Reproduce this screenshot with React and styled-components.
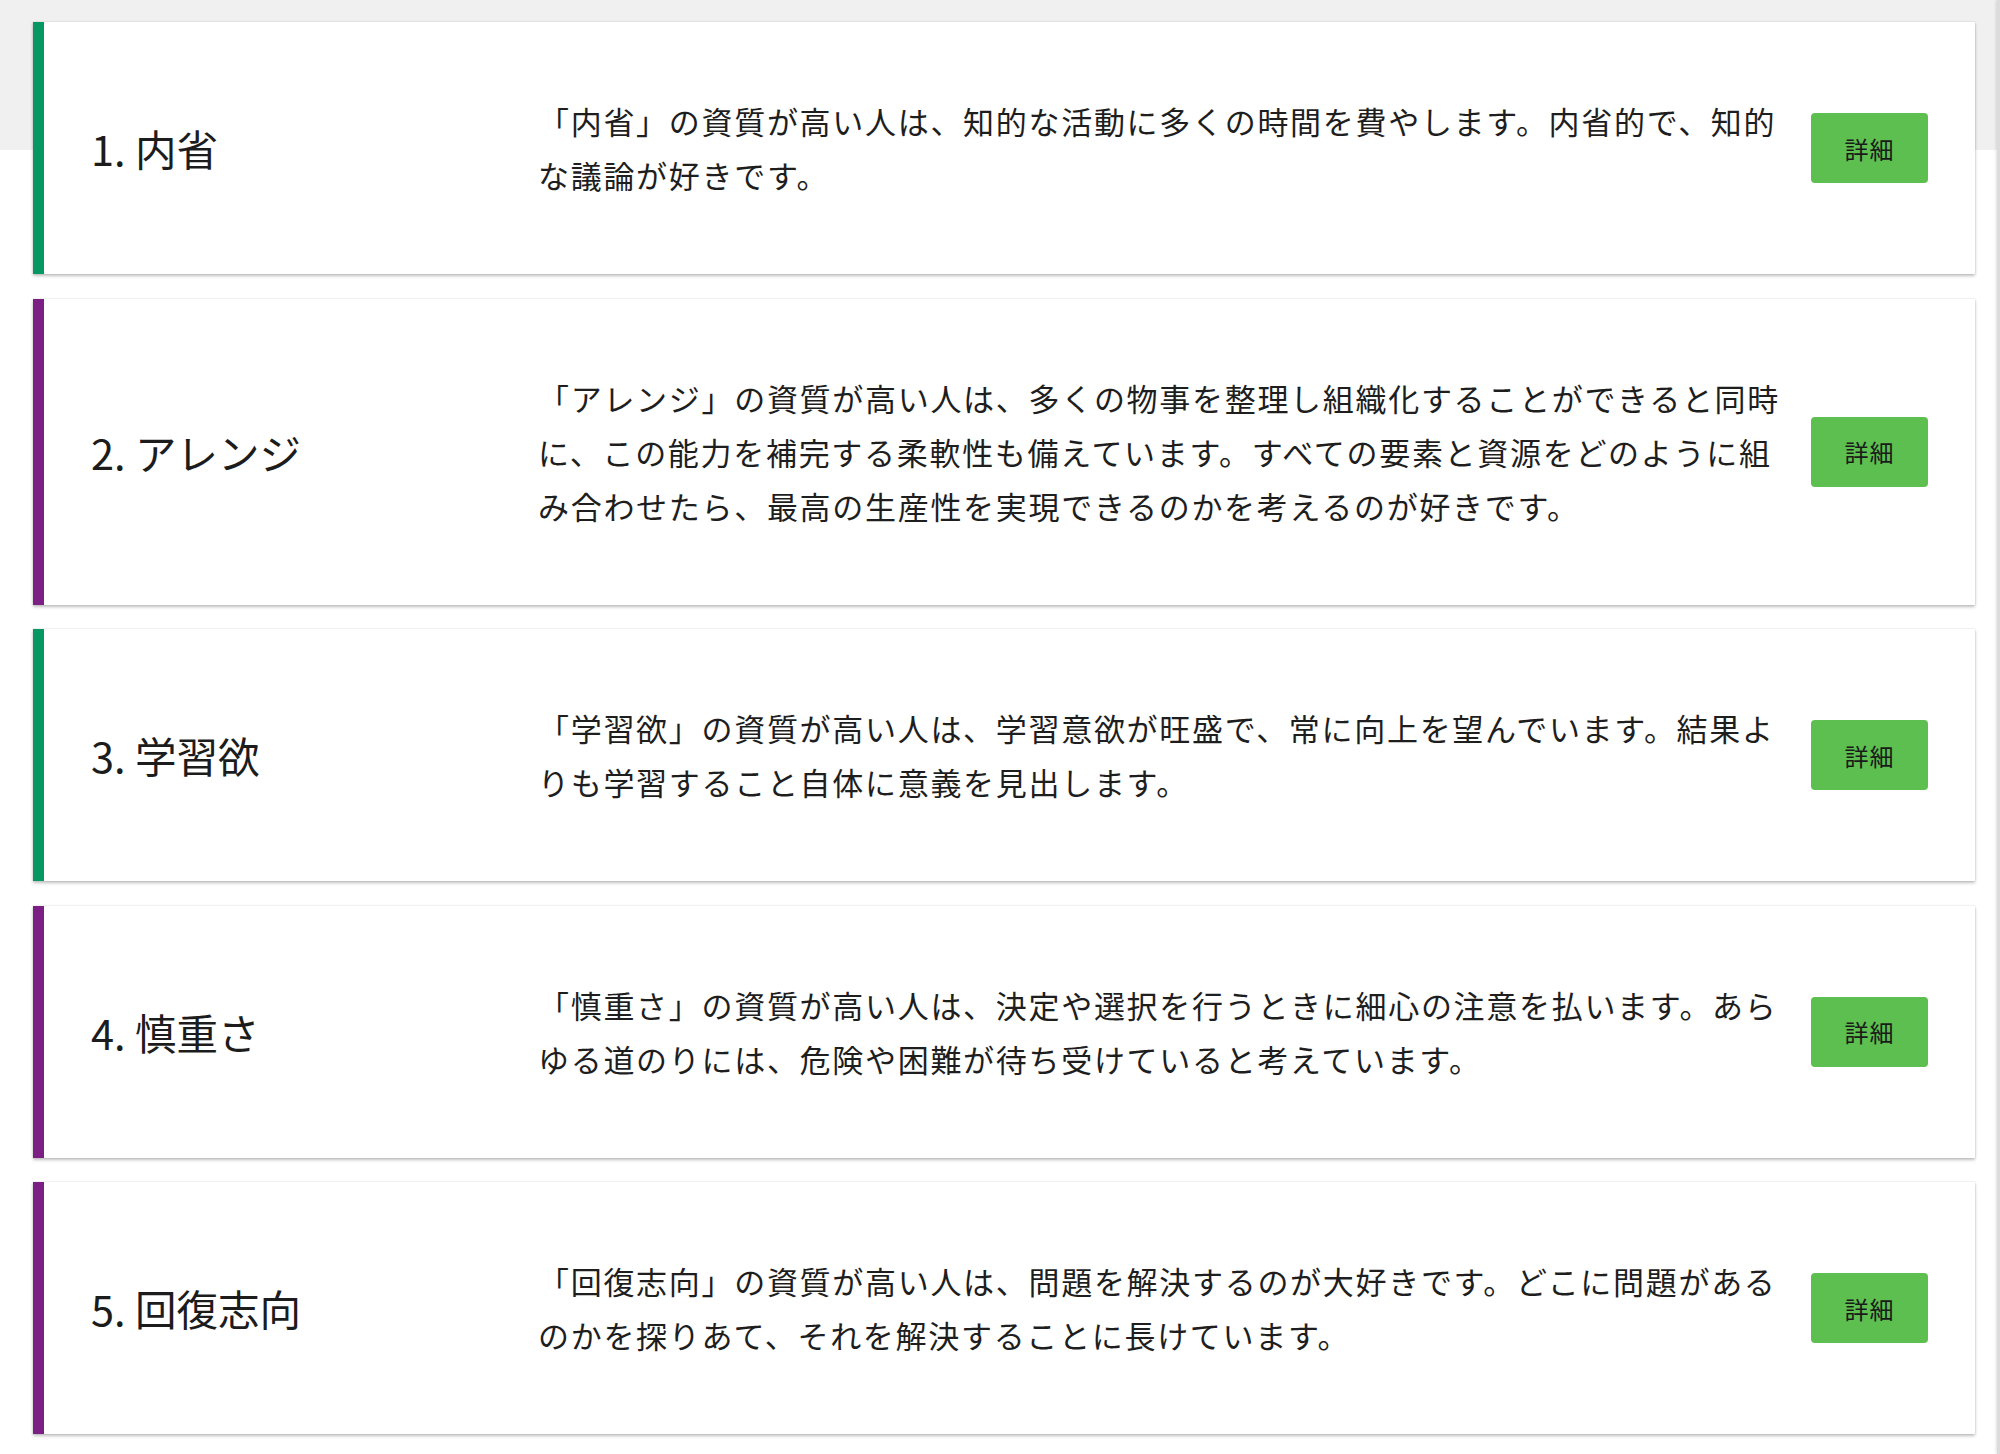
import React from "react";
import styled, { createGlobalStyle } from "styled-components";

const GREEN = "#079763";
const PURPLE = "#7b1f84";

const strengths = [
  {
    rank: 1,
    name: "内省",
    color: GREEN,
    text: "「内省」の資質が高い人は、知的な活動に多くの時間を費やします。内省的で、知的な議論が好きです。",
  },
  {
    rank: 2,
    name: "アレンジ",
    color: PURPLE,
    text: "「アレンジ」の資質が高い人は、多くの物事を整理し組織化することができると同時に、この能力を補完する柔軟性も備えています。すべての要素と資源をどのように組み合わせたら、最高の生産性を実現できるのかを考えるのが好きです。",
  },
  {
    rank: 3,
    name: "学習欲",
    color: GREEN,
    text: "「学習欲」の資質が高い人は、学習意欲が旺盛で、常に向上を望んでいます。結果よりも学習すること自体に意義を見出します。",
  },
  {
    rank: 4,
    name: "慎重さ",
    color: PURPLE,
    text: "「慎重さ」の資質が高い人は、決定や選択を行うときに細心の注意を払います。あらゆる道のりには、危険や困難が待ち受けていると考えています。",
  },
  {
    rank: 5,
    name: "回復志向",
    color: PURPLE,
    text: "「回復志向」の資質が高い人は、問題を解決するのが大好きです。どこに問題があるのかを探りあて、それを解決することに長けています。",
  },
];

const GlobalStyle = createGlobalStyle`
  html, body {
    margin: 0;
    padding: 0;
    background: #fff;
  }
  body {
    font-family: "Noto Sans CJK JP", "Noto Sans", sans-serif;
    color: #222;
  }
`;

const Page = styled.div`
  display: flex;
  min-height: 1454px;
  // 上の灰色の帯
  background: linear-gradient(#f0f0f0 0 150px, #fff 150px);
`;

const List = styled.div`
  width: 1942px;
  padding: 22px 22px 0 33px;
  display: flex;
  flex-direction: column;
  gap: 24.5px;
`;

const EdgeColumn = styled.div`
  flex: 1;
  border-left: 3px solid #dcdcdc;
  box-shadow: -1px 0 3px rgba(0, 0, 0, 0.12);
`;

const Card = styled.div`
  display: flex;
  align-items: center;
  background: #fff;
  border-left: 11px solid ${(p) => p.$accent};
  padding: 72px 47px 72px 47px;
  box-shadow: 0 2px 3px rgba(0, 0, 0, 0.24), 0 0 2px rgba(0, 0, 0, 0.14);
`;

const Title = styled.div`
  flex: 0 0 447px;
  font-size: 41.5px;
  line-height: 54px;
  color: #1c1c1c;
`;

const Description = styled.p`
  flex: 0 0 1250px;
  margin: 0 23px 0 0;
  font-size: 31px;
  line-height: 54px;
  letter-spacing: 1.7px;
  color: #1e1e1e;
`;

const DetailButton = styled.button`
  flex: 0 0 117px;
  height: 70px;
  border: none;
  border-radius: 4px;
  background: #5cbf4f;
  color: #1a1a1a;
  font-family: "Noto Sans CJK JP", sans-serif;
  font-size: 24px;
  letter-spacing: 1px;
  cursor: pointer;
`;

export default function App() {
  return (
    <>
      <GlobalStyle />
      <Page>
        <List>
          {strengths.map((s) => (
            <Card key={s.rank} $accent={s.color}>
              <Title>
                {s.rank}. {s.name}
              </Title>
              <Description>{s.text}</Description>
              <DetailButton>詳細</DetailButton>
            </Card>
          ))}
        </List>
        <EdgeColumn />
      </Page>
    </>
  );
}
